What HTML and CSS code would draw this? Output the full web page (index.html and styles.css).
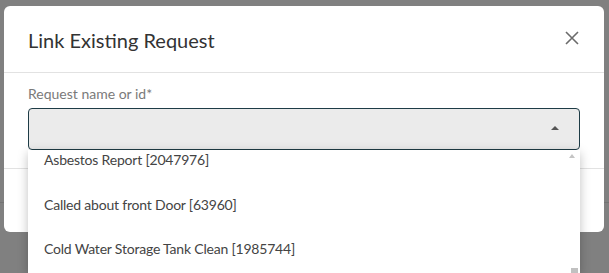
FILE: index.html
```html
<!DOCTYPE html>
<html>
<head>
<title>Link Existing Request</title>
<link rel="stylesheet" href="styles.css">
</head>
<body>
	<div class="page-line"></div>
	<div class="modal">
		<div class="modal-head">
			<label class="modal-title">Link Existing Request</label>
			<span class="modal-close">
				<svg width="14" height="14" viewBox="0 0 14 14"><path d="M1 1L13 13M13 1L1 13" stroke="#6b6b6b" stroke-width="1.6" fill="none"/></svg>
			</span>
		</div>
		<div class="modal-body">
			<label class="field-label">Request name or id*</label>
			<div class="select-wrap">
				<div class="select-box">
					<span class="select-arrow"></span>
				</div>
				<div class="select-list">
					<ul class="list-inner">
						<li>Asbestos Report [2047976]</li>
						<li>Called about front Door [63960]</li>
						<li>Cold Water Storage Tank Clean [1985744]</li>
					</ul>
					<span class="scroll-up"></span>
					<span class="scroll-thumb"></span>
				</div>
			</div>
		</div>
		<div class="modal-foot"></div>
	</div>
</body>
</html>
```

FILE: styles.css
```css
html{
	height:100%;
	overflow:hidden;
}
body{
	margin:0;
	padding:0;
	height:100%;
	background:#808080;
	font-family:Lato,"Open Sans",sans-serif;
}
.page-line{
	position:absolute;
	left:0;
	right:0;
	top:202px;
	height:1px;
	background:#737373;
}
.modal{
	position:relative;
	width:600px;
	margin:6px 0 0 4px;
	background:#ffffff;
	border-radius:6px;
}
.modal-head{
	height:66px;
	padding:0 24px;
	display:flex;
	align-items:center;
	justify-content:space-between;
	border-bottom:1px solid #e2e2e2;
}
.modal-title{
	font-size:20px;
	color:#333333;
	margin-top:1px;
}
.modal-close{
	display:flex;
	margin-right:1px;
	margin-top:-3px;
}
.modal-body{
	padding:11px 24px 18px;
}
.field-label{
	display:block;
	font-size:14px;
	line-height:20px;
	color:#7a7a7a;
	margin-bottom:4px;
}
.select-wrap{
	position:relative;
}
.select-box{
	height:40px;
	background:#ebebeb;
	border:1px solid #1e3c46;
	border-radius:4px;
	display:flex;
	align-items:center;
	justify-content:flex-end;
	padding-right:20px;
}
.select-arrow{
	width:0;
	height:0;
	border-left:4px solid transparent;
	border-right:4px solid transparent;
	border-bottom:4px solid #555555;
	margin-top:-2px;
}
.select-list{
	position:absolute;
	top:100%;
	left:0;
	right:0;
	height:123px;
	background:#ffffff;
	overflow:hidden;
	box-shadow:0 3px 10px rgba(0,0,0,0.25);
	z-index:5;
}
.list-inner{
	list-style:none;
	margin:-12px 0 0;
	padding:0;
}
.list-inner li{
	height:44.5px;
	line-height:44.5px;
	padding-left:16px;
	font-size:14px;
	letter-spacing:-0.2px;
	color:#444444;
}
.scroll-up{
	position:absolute;
	right:5px;
	top:4px;
	width:0;
	height:0;
	border-left:3px solid transparent;
	border-right:3px solid transparent;
	border-bottom:4px solid #c4c4c4;
}
.scroll-thumb{
	position:absolute;
	right:2px;
	top:118px;
	width:7px;
	height:20px;
	background:#c1c1c1;
}
.modal-foot{
	height:63px;
	border-top:1px solid #e2e2e2;
}
```
